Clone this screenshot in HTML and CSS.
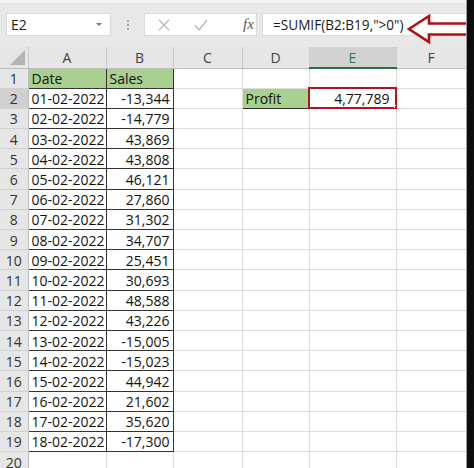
FILE: index.html
```html
<!DOCTYPE html>
<html lang="en">
<head>
  <meta charset="UTF-8">
  <title>SUMIF Profit</title>
  <link rel="stylesheet" href="styles.css">
</head>
<body>
  <div class="window">
    <div class="main">
      <div class="toolbar">
        <div class="namebox">
          <span>E2</span>
          <span class="caret"></span>
        </div>
        <div class="grip"><i></i><i></i><i></i></div>
        <div class="actions">
          <svg width="14" height="14" viewBox="0 0 14 14"><path d="M2 2 L12 12 M12 2 L2 12" stroke="#b9b9b9" stroke-width="1.4" fill="none"/></svg>
          <svg width="16" height="14" viewBox="0 0 16 14"><path d="M2 7 L6 12 L14 2" stroke="#b9b9b9" stroke-width="1.4" fill="none"/></svg>
          <span class="fx">fx</span>
        </div>
        <div class="formula">=SUMIF(B2:B19,"&gt;0")</div>
        <svg class="arrow" width="72" height="34" viewBox="0 0 72 34">
          <path d="M3 15 L23 2 L23 9.5 L74 9.5 L74 20.5 L23 20.5 L23 28 Z" fill="#fff" stroke="#b30f12" stroke-width="2.6" stroke-linejoin="miter"/>
        </svg>
      </div>

      <table class="sheet">
        <colgroup>
          <col style="width:28px"><col style="width:78px"><col style="width:67px"><col style="width:69px"><col style="width:67px"><col style="width:87px"><col style="width:70px">
        </colgroup>
        <tr class="head">
          <th class="corner"><span class="tri"></span></th><th>A</th><th>B</th><th>C</th><th>D</th><th class="sel">E</th><th>F</th>
        </tr>
        <tr><th>1</th><td class="data green left">Date</td><td class="data green left">Sales</td><td></td><td></td><td></td><td></td></tr>
        <tr><th class="sel">2</th><td class="data">01-02-2022</td><td class="data">-13,344</td><td></td><td class="data green left">Profit</td><td class="active"><div class="cellbox">4,77,789<span class="handle"></span></div></td><td></td></tr>
        <tr><th>3</th><td class="data">02-02-2022</td><td class="data">-14,779</td><td></td><td></td><td></td><td></td></tr>
        <tr><th>4</th><td class="data">03-02-2022</td><td class="data">43,869</td><td></td><td></td><td></td><td></td></tr>
        <tr><th>5</th><td class="data">04-02-2022</td><td class="data">43,808</td><td></td><td></td><td></td><td></td></tr>
        <tr><th>6</th><td class="data">05-02-2022</td><td class="data">46,121</td><td></td><td></td><td></td><td></td></tr>
        <tr><th>7</th><td class="data">06-02-2022</td><td class="data">27,860</td><td></td><td></td><td></td><td></td></tr>
        <tr><th>8</th><td class="data">07-02-2022</td><td class="data">31,302</td><td></td><td></td><td></td><td></td></tr>
        <tr><th>9</th><td class="data">08-02-2022</td><td class="data">34,707</td><td></td><td></td><td></td><td></td></tr>
        <tr><th>10</th><td class="data">09-02-2022</td><td class="data">25,451</td><td></td><td></td><td></td><td></td></tr>
        <tr><th>11</th><td class="data">10-02-2022</td><td class="data">30,693</td><td></td><td></td><td></td><td></td></tr>
        <tr><th>12</th><td class="data">11-02-2022</td><td class="data">48,588</td><td></td><td></td><td></td><td></td></tr>
        <tr><th>13</th><td class="data">12-02-2022</td><td class="data">43,226</td><td></td><td></td><td></td><td></td></tr>
        <tr><th>14</th><td class="data">13-02-2022</td><td class="data">-15,005</td><td></td><td></td><td></td><td></td></tr>
        <tr><th>15</th><td class="data">14-02-2022</td><td class="data">-15,023</td><td></td><td></td><td></td><td></td></tr>
        <tr><th>16</th><td class="data">15-02-2022</td><td class="data">44,942</td><td></td><td></td><td></td><td></td></tr>
        <tr><th>17</th><td class="data">16-02-2022</td><td class="data">21,602</td><td></td><td></td><td></td><td></td></tr>
        <tr><th>18</th><td class="data">17-02-2022</td><td class="data">35,620</td><td></td><td></td><td></td><td></td></tr>
        <tr><th>19</th><td class="data">18-02-2022</td><td class="data">-17,300</td><td></td><td></td><td></td><td></td></tr>
        <tr><th>20</th><td></td><td></td><td></td><td></td><td></td><td></td></tr>
      </table>
    </div>
    <div class="edge"></div>
  </div>
</body>
</html>
```

FILE: styles.css
```css
* {
  margin: 0;
  padding: 0;
  box-sizing: border-box;
}
body {
  font-family: "Open Sans", "Liberation Sans", sans-serif;
  color: #111;
  background: #0c0c0c;
}
.window {
  display: flex;
  width: 474px;
  height: 468px;
  overflow: hidden;
}
.main {
  width: 466px;
  background: #e8e8e8;
  overflow: hidden;
}
.edge {
  flex: 1;
  background: #0c0c0c;
  border-left: 1px solid #9a9a9a;
}

/* formula bar */
.toolbar {
  position: relative;
  height: 47px;
  display: flex;
  align-items: flex-start;
  padding: 10px 0 0 6px;
  border-top: 3px solid #f3f3f3;
}
.namebox {
  width: 105px;
  height: 23px;
  background: #fff;
  border: 1px solid #dadada;
  display: flex;
  align-items: center;
  justify-content: space-between;
  padding: 0 8px 0 4px;
  font-size: 14px;
  color: #222;
}
.caret {
  width: 0;
  height: 0;
  border-left: 3px solid transparent;
  border-right: 3px solid transparent;
  border-top: 3px solid #777;
}
.grip {
  width: 33px;
  height: 23px;
  display: flex;
  flex-direction: column;
  align-items: center;
  justify-content: center;
  gap: 2px;
}
.grip i {
  width: 2px;
  height: 2px;
  background: #a8a8a8;
}
.actions {
  width: 113px;
  height: 23px;
  background: #fff;
  border: 1px solid #dadada;
  display: flex;
  align-items: center;
  padding: 0 0 0 12px;
  gap: 22px;
}
.fx {
  font-family: "Liberation Serif", serif;
  font-style: italic;
  font-size: 15px;
  color: #555;
  margin-left: 12px;
}
.formula {
  flex: 1;
  height: 23px;
  margin-left: 5px;
  background: #fff;
  border: 1px solid #dadada;
  border-right: none;
  padding: 0 0 0 10px;
  font-size: 13.6px;
  line-height: 21px;
  color: #1a1a1a;
}
.arrow {
  position: absolute;
  left: 406px;
  top: 11px;
}

/* grid */
.sheet {
  width: 466px;
  table-layout: fixed;
  border-collapse: collapse;
  font-size: 14px;
  background: #fff;
}
.sheet tr {
  height: 20.2px;
}
.sheet tr.head {
  height: 21px;
}
.sheet th,
.sheet td {
  line-height: 16px;
}
.head th {
  background: #e6e6e6;
  color: #444;
  font-weight: normal;
  border-right: 1px solid #cbcbcb;
  border-bottom: 1px solid #bcbcbc;
}
.head th.sel {
  background: #d2d2d2;
  border-bottom: 2px solid #217346;
  color: #3a7a52;
}
.corner {
  position: relative;
}
.tri {
  position: absolute;
  right: 3px;
  bottom: 3px;
  width: 0;
  height: 0;
  border-left: 15px solid transparent;
  border-bottom: 15px solid #b5b5b5;
}
th {
  background: #e6e6e6;
  color: #333;
  font-weight: normal;
  text-align: center;
  border-bottom: 1px solid #d0d0d0;
  border-right: 1px solid #bcbcbc;
  padding-top: 2px;
}
th.sel {
  background: #d0d0d0;
}
td {
  border: 1px solid #dcdcdc;
  padding: 2px 3px 0 3px;
  text-align: right;
  white-space: nowrap;
  overflow: hidden;
  color: #111;
}
td.data {
  border-color: #333;
}
td.green {
  background: #a9d08e;
}
td.left {
  text-align: left;
  padding-left: 3px;
}
td.active {
  padding: 0;
  outline: 2px solid #b3141a;
  outline-offset: -1px;
}
.cellbox {
  position: relative;
  padding: 2px 6px 0 3px;
}
.handle {
  position: absolute;
  right: -3px;
  bottom: -3px;
  width: 5px;
  height: 5px;
  background: #b3141a;
  border: 1px solid #fff;
}
```
